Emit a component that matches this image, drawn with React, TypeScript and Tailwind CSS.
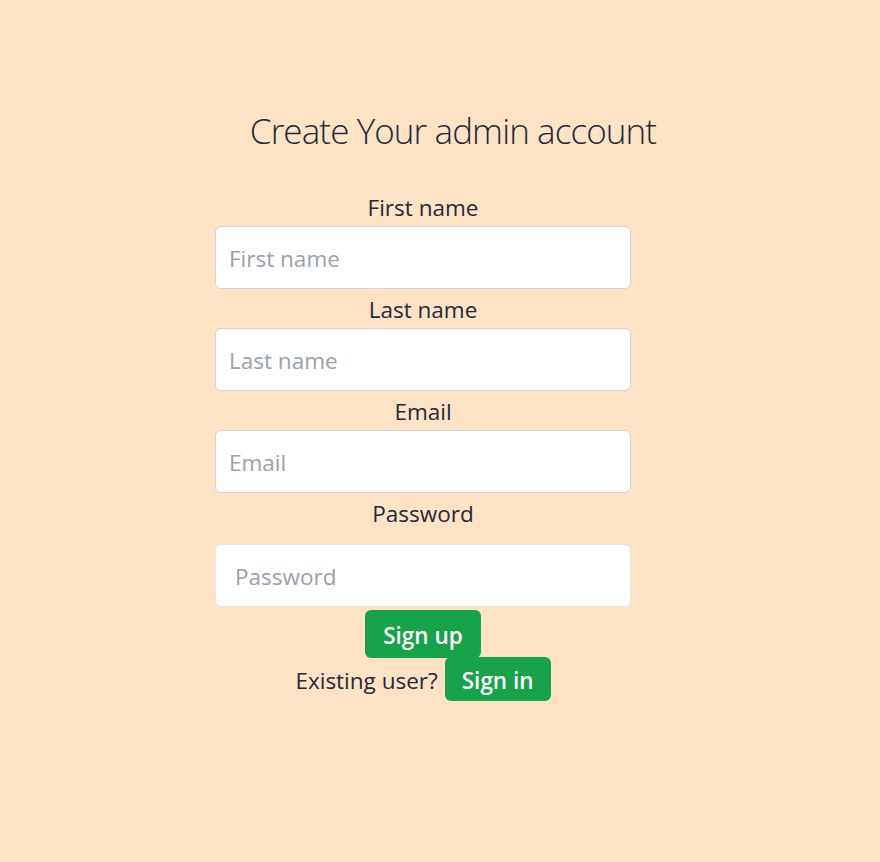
const fields = [
  { label: "First name", type: "text" },
  { label: "Last name", type: "text" },
  { label: "Email", type: "email" },
];

export default function App() {
  return (
    <div className="min-h-[862px] bg-[#ffe3c4] font-['Open_Sans',sans-serif] text-[#212a3a]">
      <div className="flex flex-col items-center pr-[34px] pt-[109px]">
        <h1 className="ml-[60px] text-[35px] font-light leading-[44px] tracking-[-0.9px]">
          Create Your admin account
        </h1>

        <form className="mt-[34px] flex w-[416px] flex-col items-center">
          {fields.map((f) => (
            <div key={f.label} className="flex w-full flex-col items-center">
              <label className="pt-[3px] text-[22.5px] leading-[36px]">{f.label}</label>
              <input
                type={f.type}
                placeholder={f.label}
                className="h-[63px] w-full rounded-md border border-[#cfd4dc] bg-white px-[13px] pt-[2px] text-[22.5px] placeholder:text-[#9aa1ab] focus:outline-none"
              />
            </div>
          ))}

          <label className="pt-[3px] text-[22.5px] leading-[36px]">Password</label>
          <input
            type="password"
            placeholder="Password"
            className="mt-[12px] h-[63px] w-full rounded-md border border-[#e2e5ea] bg-white px-[19px] pt-[2px] text-[22.5px] placeholder:text-[#9aa1ab] focus:outline-none"
          />

          <button
            type="button"
            className="mt-[3px] h-[48px] rounded-md bg-[#17a34a] px-[18px] pt-[3px] text-[22.5px] font-semibold text-white"
          >
            Sign up
          </button>

          <div className="-mt-px flex items-center gap-[7px]">
            <span className="pt-[4px] text-[22.5px]">Existing user?</span>
            <button
              type="button"
              className="h-[44px] rounded-md bg-[#17a34a] px-[17px] pt-[4px] text-[22.5px] font-semibold text-white"
            >
              Sign in
            </button>
          </div>
        </form>
      </div>
    </div>
  );
}
